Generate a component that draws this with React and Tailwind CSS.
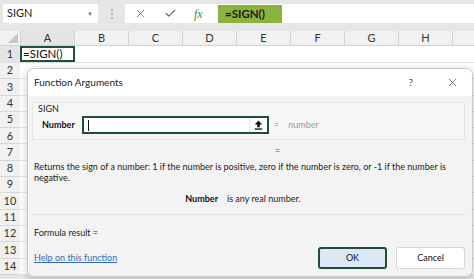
import { X, Check } from 'lucide-react';

const cols = ['A', 'B', 'C', 'D', 'E', 'F', 'G', 'H', ''];
const rows = [2, 3, 4, 5, 6, 7, 8, 9, 10, 11, 12, 13, 14];

// the little "collapse dialog" button inside the argument box
const RefIcon = () => (
  <svg width="9" height="10" viewBox="0 0 9 10">
    <path d="M4.5 0.5 L8.2 4.4 H5.8 V7.2 H3.2 V4.4 H0.8 Z" fill="#111" />
    <rect x="0.8" y="8.4" width="7.4" height="1.3" fill="#111" />
  </svg>
);

const App = () => {
  return (
    <div className="relative w-[474px] h-[279px] overflow-hidden bg-[#e6e6e6] text-[#1c1c1c] font-[Lato,sans-serif]">
      {/* formula bar */}
      <div className="flex items-start h-[31px] pt-[4px]">
        <div className="ml-[3px] w-[95px] h-[19px] bg-white flex items-center justify-between pl-[4px] pr-[5px]">
          <span className="text-[11px] text-[#222]">SIGN</span>
          <span className="text-[6px] text-[#777]">▼</span>
        </div>
        <div className="w-[27px] h-[19px] flex flex-col items-center justify-center gap-[2px]">
          <span className="w-[2px] h-[2px] bg-[#b0b0b0]" />
          <span className="w-[2px] h-[2px] bg-[#b0b0b0]" />
          <span className="w-[2px] h-[2px] bg-[#b0b0b0]" />
        </div>
        <div className="flex-1 h-[19px] bg-white flex items-center">
          <div className="w-[93px] flex items-center">
            <X size={13} strokeWidth={1.3} className="ml-[9px] text-[#555]" />
            <Check size={13} strokeWidth={2} className="ml-[17px] text-[#666]" />
            <span className="ml-[17px] text-[12px] italic text-[#3d8a3d] font-['Liberation_Serif',serif]">fx</span>
          </div>
          <div className="w-[64px] h-[18px] bg-[#8db33f] flex items-center pl-[7px] text-[11.5px] font-bold text-[#1a1a1a]">
            =SIGN()
          </div>
        </div>
      </div>

      {/* column headers */}
      <div className="flex h-[15px] bg-[#f1f1f1] border-b border-[#d2d2d2]">
        <div className="w-[20px] shrink-0 flex items-end justify-end pr-[2px] pb-[2px]">
          <div className="w-0 h-0 border-l-[10px] border-l-transparent border-b-[10px] border-b-[#c6c6c6]" />
        </div>
        {cols.map((c, i) => (
          <div
            key={i}
            className={`w-[54px] shrink-0 flex items-center justify-center text-[11px] text-[#333] border-l border-[#d2d2d2] ${c === 'A' ? 'bg-[#e4e4e4]' : ''}`}
          >
            {c}
          </div>
        ))}
      </div>

      {/* row 1 */}
      <div className="flex h-[17px] bg-white border-b border-[#e0e0e0]">
        <div className="w-[20px] shrink-0 bg-[#e4e4e4] flex items-center justify-center text-[11px] text-[#333]">
          1
        </div>
        <div className="w-[55px] shrink-0 border-2 border-[#1f4e3d] flex items-center pl-[1px] text-[11.5px] text-[#111]">
          =SIGN()
        </div>
        <div className="flex-1" />
      </div>

      {/* remaining rows, mostly hidden behind the dialog */}
      {rows.map((r) => (
        <div key={r} className="flex h-[16.3px]">
          <div className="w-[20px] shrink-0 bg-[#f1f1f1] border-b border-[#d6d6d6] flex items-center justify-center text-[11px] text-[#333]">
            {r}
          </div>
          <div className="flex-1 bg-white border-b border-[#e8e8e8]" />
        </div>
      ))}

      {/* Function Arguments dialog */}
      <div className="absolute left-[27px] top-[68px] w-[446px] h-[209px] rounded-[7px] border border-[#cacaca] bg-[#f3f3f3] shadow-[0_2px_8px_rgba(0,0,0,0.22)] overflow-hidden flex flex-col">
        <div className="h-[27px] shrink-0 bg-white flex items-center pl-[6px] text-[10px] text-[#1a1a1a]">
          <span className="flex-1">Function Arguments</span>
          <span className="text-[10px] text-[#444]">?</span>
          <X size={13} strokeWidth={1.2} className="ml-[33px] mr-[13px] text-[#333]" />
        </div>

        <div className="flex-1 flex flex-col px-[6px] pt-[6px] text-[9px]">
          {/* argument group */}
          <div className="ml-[-2px] mr-[1px] h-[38px] shrink-0 border border-[#e4e4e4] bg-[#f6f6f6] rounded-[2px] flex flex-col px-[5px]">
            <div className="leading-[10px] mt-[1px]">SIGN</div>
            <div className="flex items-center mt-[2px]">
              <span className="w-[44px] pl-[4px] font-bold text-[#111]">Number</span>
              <div className="w-[187px] h-[18px] shrink-0 border-2 border-[#1f4e3d] bg-white flex items-center">
                <span className="ml-[4px] w-px h-[11px] bg-[#111]" />
                <span className="flex-1" />
                <span className="w-[17px] h-[14px] mr-[1px] flex items-center justify-center border-l border-[#e2e2e2]">
                  <RefIcon />
                </span>
              </div>
              <span className="ml-[5px] text-[#888]">=</span>
              <span className="ml-[9px] text-[#9a9a9a]">number</span>
            </div>
          </div>

          <div className="pl-[241px] leading-[12px] mt-[5px] text-[#555]">=</div>

          <p className="mt-[4px] leading-[11px] pr-[16px]">
            Returns the sign of a number: 1 if the number is positive, zero if the number is zero, or -1 if the number is negative.
          </p>

          <div className="mt-[10px] flex leading-[12px]">
            <span className="w-[184px] text-right font-bold text-[#111]">Number</span>
            <span className="ml-[9px]">is any real number.</span>
          </div>

          <div className="mt-[9px] ml-[-2px] mr-[1px] border-t border-[#e0e0e0]" />

          <div className="mt-[12px] leading-[12px]">Formula result =</div>

          <div className="flex items-center mt-[8px]">
            <span className="flex-1 text-[#2f6db5] underline">Help on this function</span>
            <button className="w-[69px] h-[22px] bg-[#dce8f5] border-2 border-[#1f4e3d] rounded-[3px] text-[9px] text-[#111]">
              OK
            </button>
            <button className="ml-[9px] mr-[1px] w-[69px] h-[22px] bg-white border border-[#d6d6d6] rounded-[3px] text-[9px] text-[#111]">
              Cancel
            </button>
          </div>
        </div>
      </div>
    </div>
  );
};

export default App;
